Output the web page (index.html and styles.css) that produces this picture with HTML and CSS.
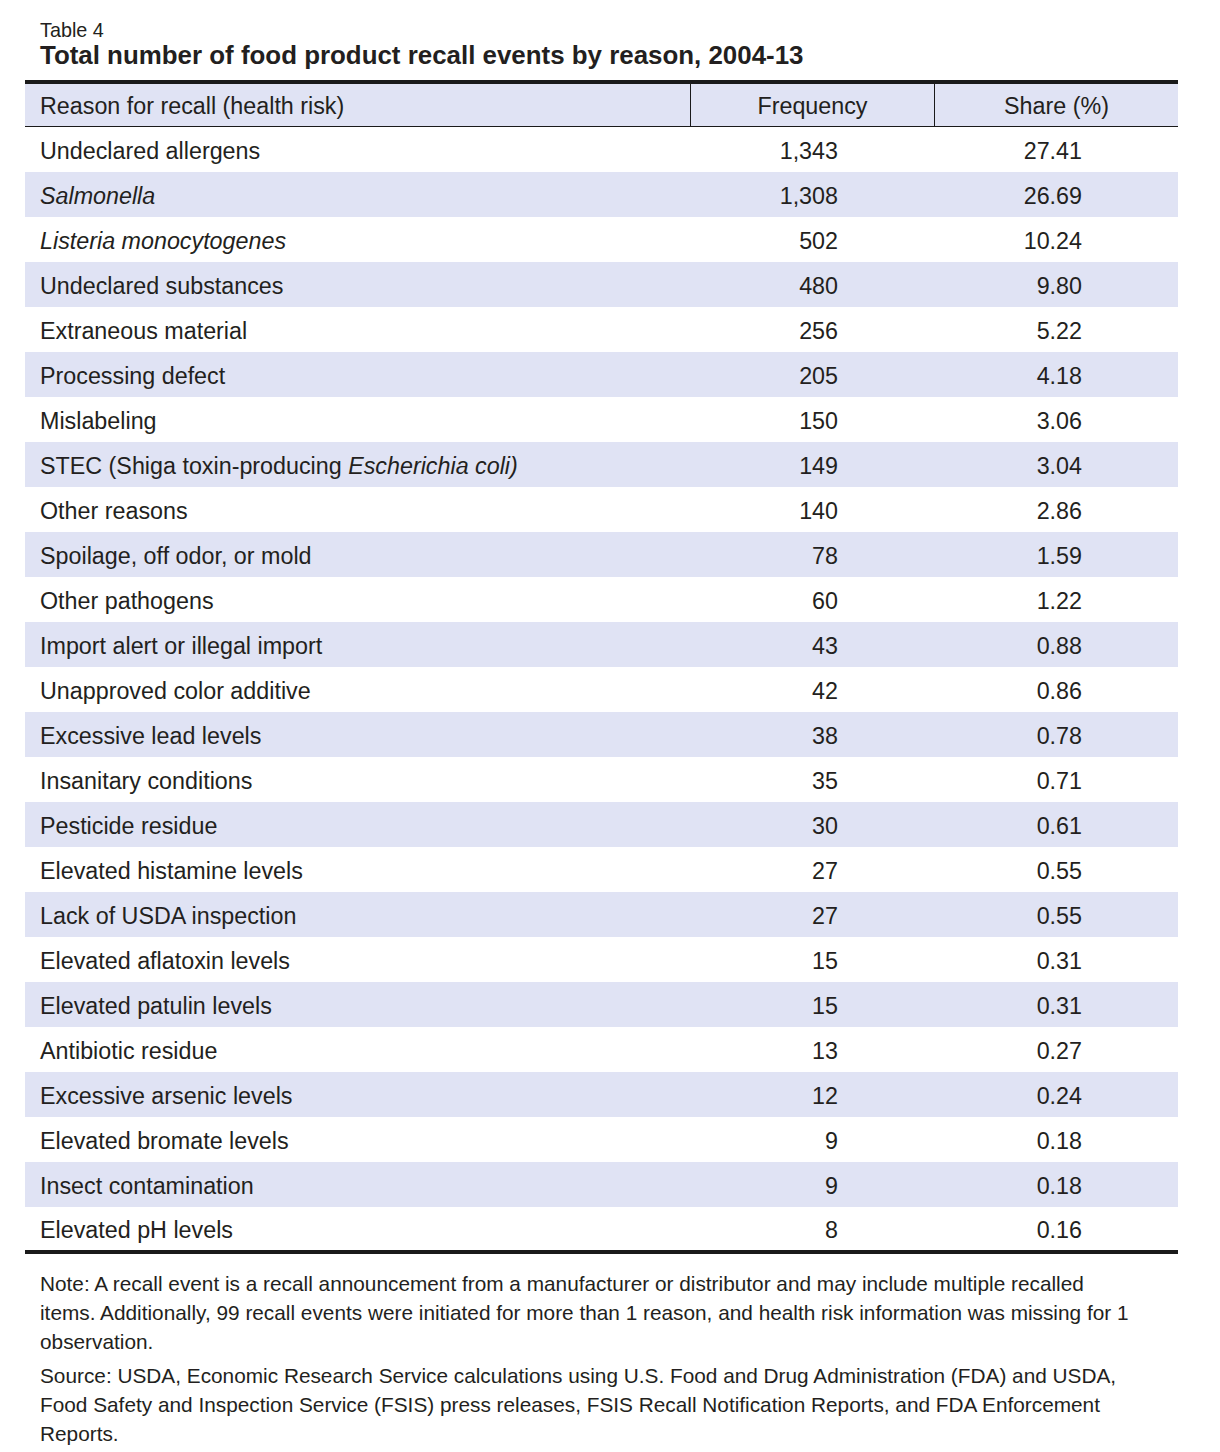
FILE: index.html
```html
<!DOCTYPE html>
<html lang="en">
<head>
<meta charset="utf-8">
<title>Table 4</title>
<link rel="stylesheet" href="styles.css">
</head>
<body>
<div class="page">
  <div class="caption">
    <div class="label">Table 4</div>
    <h1 class="title">Total number of food product recall events by reason, 2004-13</h1>
  </div>
  <table class="data">
    <colgroup>
      <col class="c-reason">
      <col class="c-num">
      <col class="c-num">
    </colgroup>
    <thead>
      <tr>
        <th class="h-reason">Reason for recall (health risk)</th>
        <th class="h-num">Frequency</th>
        <th class="h-num">Share (%)</th>
      </tr>
    </thead>
    <tbody>
      <tr><td>Undeclared allergens</td><td class="num">1,343</td><td class="num">27.41</td></tr>
      <tr><td><em>Salmonella</em></td><td class="num">1,308</td><td class="num">26.69</td></tr>
      <tr><td><em>Listeria monocytogenes</em></td><td class="num">502</td><td class="num">10.24</td></tr>
      <tr><td>Undeclared substances</td><td class="num">480</td><td class="num">9.80</td></tr>
      <tr><td>Extraneous material</td><td class="num">256</td><td class="num">5.22</td></tr>
      <tr><td>Processing defect</td><td class="num">205</td><td class="num">4.18</td></tr>
      <tr><td>Mislabeling</td><td class="num">150</td><td class="num">3.06</td></tr>
      <tr><td>STEC (Shiga toxin-producing <em>Escherichia coli)</em></td><td class="num">149</td><td class="num">3.04</td></tr>
      <tr><td>Other reasons</td><td class="num">140</td><td class="num">2.86</td></tr>
      <tr><td>Spoilage, off odor, or mold</td><td class="num">78</td><td class="num">1.59</td></tr>
      <tr><td>Other pathogens</td><td class="num">60</td><td class="num">1.22</td></tr>
      <tr><td>Import alert or illegal import</td><td class="num">43</td><td class="num">0.88</td></tr>
      <tr><td>Unapproved color additive</td><td class="num">42</td><td class="num">0.86</td></tr>
      <tr><td>Excessive lead levels</td><td class="num">38</td><td class="num">0.78</td></tr>
      <tr><td>Insanitary conditions</td><td class="num">35</td><td class="num">0.71</td></tr>
      <tr><td>Pesticide residue</td><td class="num">30</td><td class="num">0.61</td></tr>
      <tr><td>Elevated histamine levels</td><td class="num">27</td><td class="num">0.55</td></tr>
      <tr><td>Lack of USDA inspection</td><td class="num">27</td><td class="num">0.55</td></tr>
      <tr><td>Elevated aflatoxin levels</td><td class="num">15</td><td class="num">0.31</td></tr>
      <tr><td>Elevated patulin levels</td><td class="num">15</td><td class="num">0.31</td></tr>
      <tr><td>Antibiotic residue</td><td class="num">13</td><td class="num">0.27</td></tr>
      <tr><td>Excessive arsenic levels</td><td class="num">12</td><td class="num">0.24</td></tr>
      <tr><td>Elevated bromate levels</td><td class="num">9</td><td class="num">0.18</td></tr>
      <tr><td>Insect contamination</td><td class="num">9</td><td class="num">0.18</td></tr>
      <tr><td>Elevated pH levels</td><td class="num">8</td><td class="num">0.16</td></tr>
    </tbody>
  </table>
  <div class="notes">
    <p>Note: A recall event is a recall announcement from a manufacturer or distributor and may include multiple recalled items. Additionally, 99 recall events were initiated for more than 1 reason, and health risk information was missing for 1 observation.</p>
    <p>Source: USDA, Economic Research Service calculations using U.S. Food and Drug Administration (FDA) and USDA, Food Safety and Inspection Service (FSIS) press releases, FSIS Recall Notification Reports, and FDA Enforcement Reports.</p>
  </div>
</div>
</body>
</html>
```

FILE: styles.css
```css
html, body {
  margin: 0;
  padding: 0;
  background: #ffffff;
}

body {
  font-family: "Liberation Sans", Arial, Helvetica, sans-serif;
  color: #231f20;
}

.page {
  width: 1153px;
  padding: 19px 0 0 25px;
}

.caption {
  padding-left: 15px;
}

.label {
  font-size: 19.8px;
  line-height: 22px;
}

.title {
  margin: -1px 0 0 0;
  font-size: 25.9px;
  line-height: 30px;
  font-weight: bold;
}

.data {
  margin-top: 10px;
  width: 1153px;
  border-collapse: separate;
  border-spacing: 0;
  table-layout: fixed;
  font-size: 23.3px;
  border-bottom: 4px solid #1a1a1a;
}

.c-reason { width: 665px; }
.c-num { width: 244px; }

.data th {
  font-weight: normal;
  background: #e0e3f4;
  border-top: 4px solid #1a1a1a;
  border-bottom: 1px solid #1a1a1a;
  height: 40px;
  padding: 2px 0 0 0;
  line-height: 40px;
  vertical-align: top;
}

.data th.h-reason {
  text-align: left;
  padding-left: 15px;
}

.data th.h-num {
  text-align: center;
  border-left: 1px solid #1a1a1a;
}

.data td {
  height: 42px;
  padding: 3px 0 0 15px;
  line-height: 42px;
  vertical-align: top;
  white-space: nowrap;
}

.data td.num {
  text-align: right;
  padding: 3px 96px 0 0;
}

.data tbody tr:nth-child(even) td {
  background: #e0e3f4;
}

.data tbody tr:last-child td {
  height: 40px;
  line-height: 40px;
}

.notes {
  margin-top: 15px;
  padding-left: 15px;
  width: 1095px;
  font-size: 20.8px;
  line-height: 29px;
}

.notes p {
  margin: 0 0 5px 0;
}
```
